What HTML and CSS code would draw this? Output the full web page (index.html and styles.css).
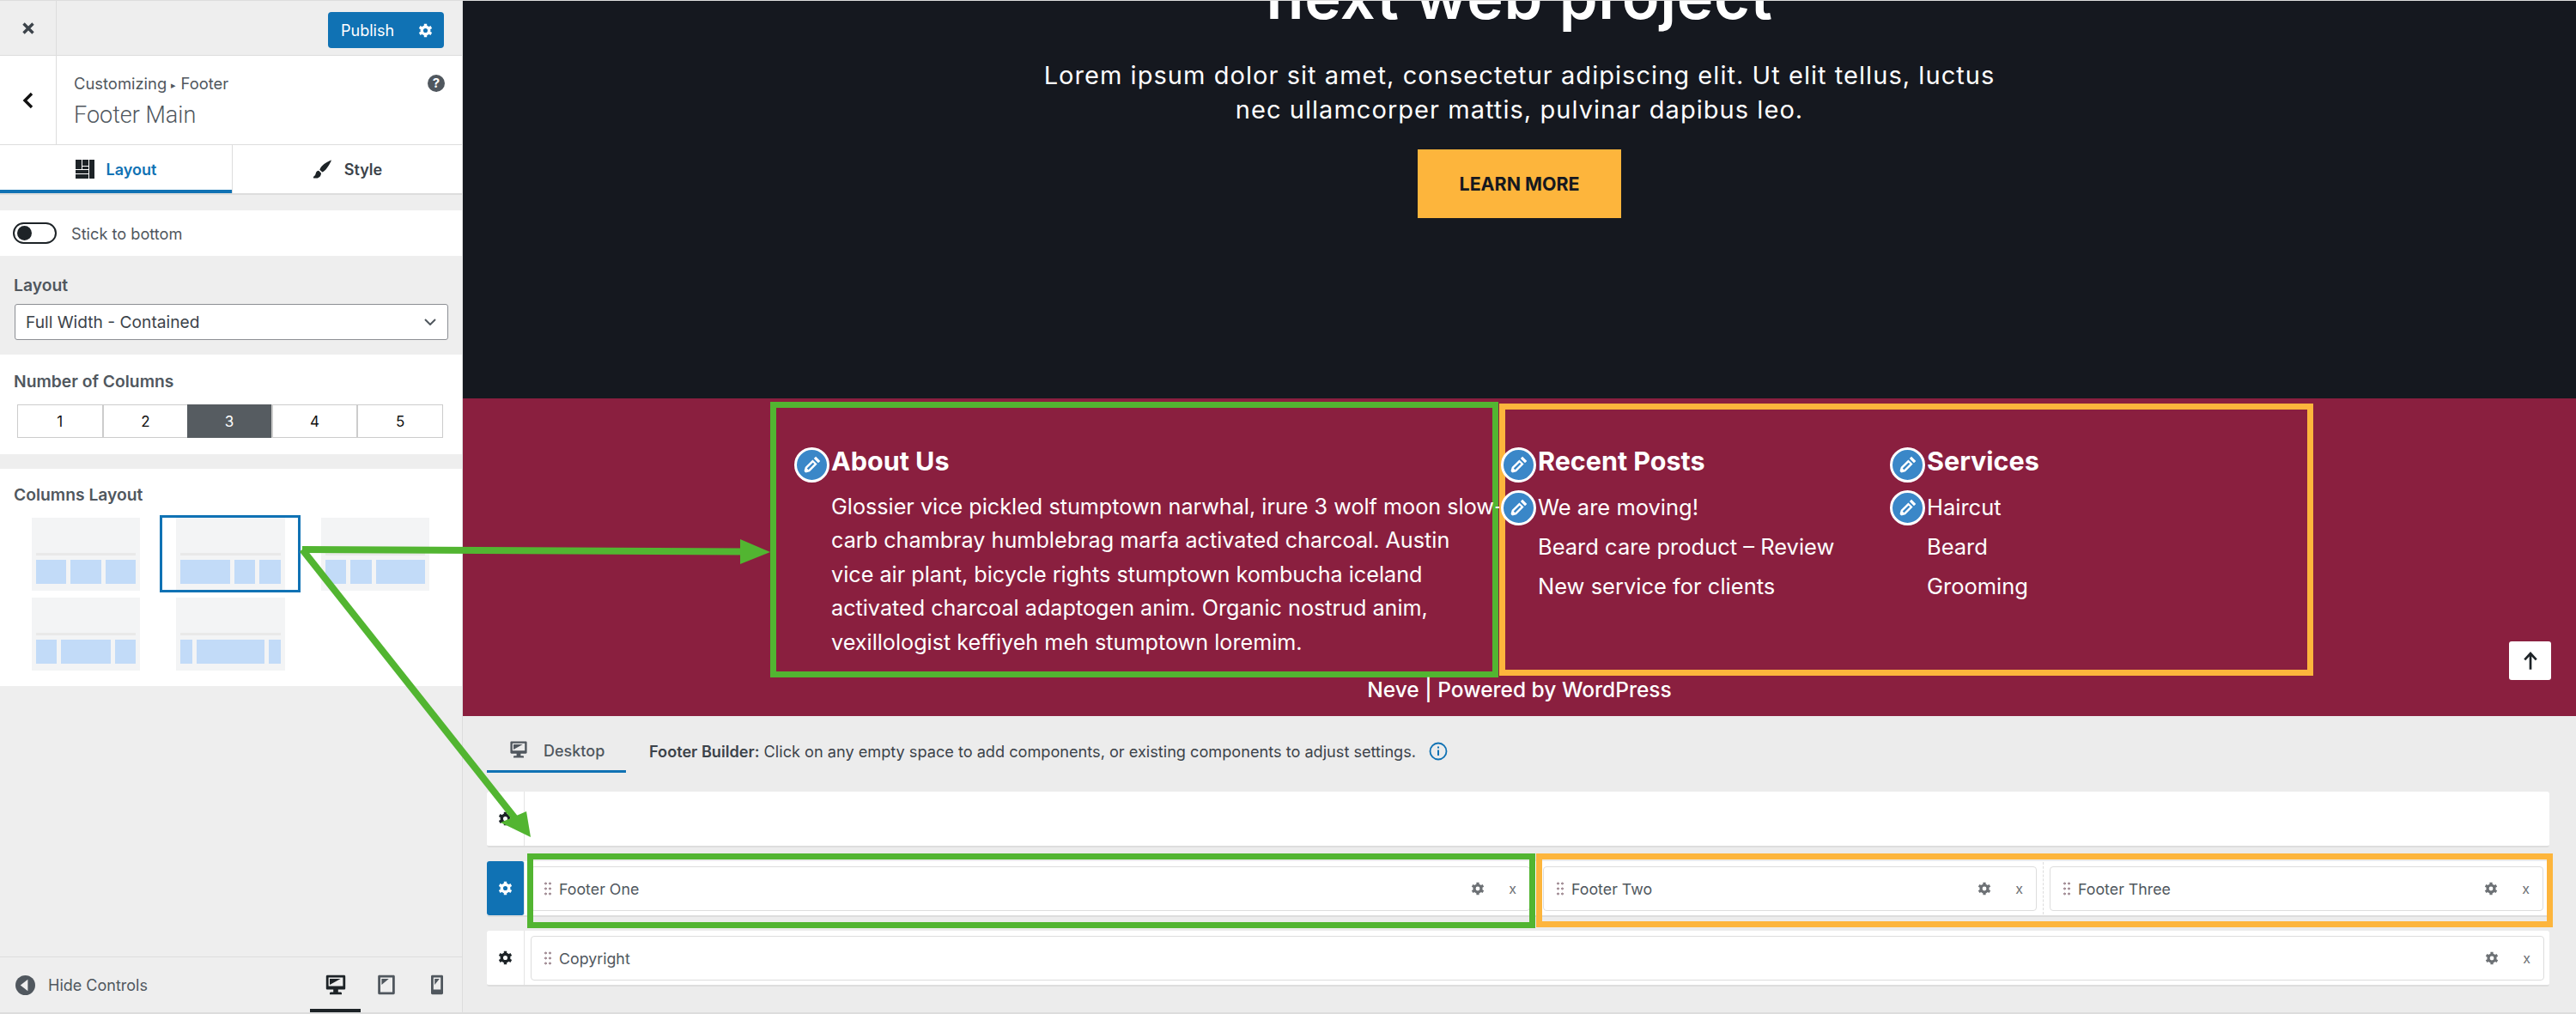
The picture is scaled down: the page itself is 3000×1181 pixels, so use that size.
FILE: index.html
```html
<!DOCTYPE html>
<html lang="en">
<head>
<meta charset="utf-8">
<title>Customizing Footer</title>
<link rel="stylesheet" href="styles.css">
</head>
<body>
<svg class="defs" width="0" height="0" aria-hidden="true">
  <symbol id="gear" viewBox="0 0 20 20">
    <circle cx="10" cy="10" r="5" fill="none" stroke="currentColor" stroke-width="4"/>
    <path d="M10 .8v4M10 15.200v4M2 5.400l3.500 2M14.500 12.600l3.500 2M2 14.600l3.500-2M14.500 7.400l3.500-2" stroke="currentColor" stroke-width="4" fill="none"/>
  </symbol>
  <symbol id="pencil" viewBox="0 0 20 20">
    <path d="M14 1.500l4.500 4.500-2 2L12 3.500zM10.800 4.700l4.500 4.500-7.500 7.500-6.300 1.800 1.800-6.300zM11 7.500l-6 6 1.500 1.500 6-6z" fill="#fff" fill-rule="evenodd"/>
  </symbol>
</svg>
<div class="app">
  <aside class="sidebar">
    <div class="topbar">
      <div class="close-cell">
        <svg class="close-icon" viewBox="0 0 16 16"><path d="M2.500 2.500l11 11M13.500 2.500l-11 11" stroke="#3c434a" stroke-width="3.400"/></svg>
      </div>
      <div class="publish">
        <span>Publish</span>
        <svg class="pub-gear"><use href="#gear"/></svg>
      </div>
    </div>
    <div class="section-head">
      <div class="back-cell">
        <svg class="back-icon" viewBox="0 0 14 20"><path d="M11 2L3 10l8 8" fill="none" stroke="#111" stroke-width="3.400"/></svg>
      </div>
      <div class="head-text">
        <div class="crumb">Customizing <span class="crumb-arrow">▸</span> Footer</div>
        <div class="head-title">Footer Main</div>
      </div>
      <div class="help">?</div>
    </div>
    <div class="tabs">
      <div class="tab tab-active">
        <svg class="tab-icon" viewBox="0 0 22 22"><path d="M0 0h7v11H0zM8 0h7v7H8zM8 8h7v3H8zM0 12h15v4H0zM0 17h15v5H0zM16 0h6v22h-6z" fill="#1d2327"/></svg>
        <span>Layout</span>
      </div>
      <div class="tab">
        <svg class="tab-icon brush" viewBox="0 0 24 24"><path d="M23.500.5c-2 .6-8.500 3.600-12 7.500-1.400 1.500-2.600 3.600-3 4.800l3.400 3c1.300-.6 3.200-2 4.600-3.600 3.400-3.800 6.200-9.700 7-11.700zM7.300 14c-2.300.2-3.300 1.700-3.800 3.500-.4 1.700-1.200 3.200-3 4.200 0 .8 0 1.500.2 1.800h5.100c2.800-1 4.400-2.800 4.600-6.200z" fill="#1d2327"/></svg>
        <span>Style</span>
      </div>
    </div>
    <div class="panel stick">
      <div class="toggle"><span class="knob"></span></div>
      <span class="stick-label">Stick to bottom</span>
    </div>
    <div class="layout-field">
      <div class="field-label">Layout</div>
      <div class="select">
        <span>Full Width - Contained</span>
        <svg class="chev" viewBox="0 0 14 8"><path d="M1 1l6 6 6-6" fill="none" stroke="#50575e" stroke-width="2"/></svg>
      </div>
    </div>
    <div class="panel num-cols">
      <div class="field-label">Number of Columns</div>
      <div class="segments">
        <div class="seg">1</div>
        <div class="seg">2</div>
        <div class="seg seg-on">3</div>
        <div class="seg">4</div>
        <div class="seg">5</div>
      </div>
    </div>
    <div class="panel col-layout">
      <div class="field-label">Columns Layout</div>
      <div class="thumbs">
        <div class="thumb"><i class="t-line"></i><div class="t-cols"><b class="w35"></b><b class="w35"></b><b class="w35"></b></div></div>
        <div class="thumb thumb-on"><i class="t-line"></i><div class="t-cols"><b class="w56"></b><b class="w24"></b><b class="w24"></b></div></div>
        <div class="thumb"><i class="t-line"></i><div class="t-cols"><b class="w24"></b><b class="w24"></b><b class="w56"></b></div></div>
        <div class="thumb"><i class="t-line"></i><div class="t-cols"><b class="w24"></b><b class="w56"></b><b class="w24"></b></div></div>
        <div class="thumb"><i class="t-line"></i><div class="t-cols"><b class="w14"></b><b class="w76"></b><b class="w14"></b></div></div>
      </div>
    </div>
    <div class="side-foot">
      <div class="hide-controls">
        <svg class="hide-icon" viewBox="0 0 24 24"><circle cx="12" cy="12" r="12" fill="#50575e"/><path d="M15 5v14L6 12z" fill="#eee"/></svg>
        <span>Hide Controls</span>
      </div>
      <div class="devices">
        <div class="device device-on"><svg viewBox="0 0 20 20"><path d="M3 2h14c.55 0 1 .45 1 1v10c0 .55-.45 1-1 1h-5v2h2c.55 0 1 .45 1 1v1H5v-1c0-.55.45-1 1-1h2v-2H3c-.55 0-1-.45-1-1V3c0-.55.45-1 1-1zm13 9V4H4v7h12zM5 5h9L5 10V5z"/></svg></div>
        <div class="device"><svg viewBox="0 0 20 20"><path d="M4 2h12c.55 0 1 .45 1 1v14c0 .55-.45 1-1 1H4c-.55 0-1-.45-1-1V3c0-.55.45-1 1-1zm11 14V4H5v12h10zM6 5h6l-6 5V5z"/></svg></div>
        <div class="device"><svg viewBox="0 0 20 20"><path d="M6 2h8c.55 0 1 .45 1 1v14c0 .55-.45 1-1 1H6c-.55 0-1-.45-1-1V3c0-.55.45-1 1-1zm7 12V4H7v10h6zM8 5h4l-4 5V5z"/></svg></div>
      </div>
    </div>
  </aside>

  <main class="main">
    <section class="preview">
      <div class="hero">
        <h1 class="hero-title">next web project</h1>
        <p class="hero-text">Lorem ipsum dolor sit amet, consectetur adipiscing elit. Ut elit tellus, luctus<br>nec ullamcorper mattis, pulvinar dapibus leo.</p>
        <a class="hero-btn">LEARN MORE</a>
      </div>
      <footer class="site-footer">
        <div class="foot-widgets">
          <div class="box-green">
            <h3 class="w-title"><svg class="pen"><use href="#pencil"/></svg>About Us</h3>
            <p class="w-para">Glossier vice pickled stumptown narwhal, irure 3 wolf moon slow-<br>carb chambray humblebrag marfa activated charcoal. Austin<br>vice air plant, bicycle rights stumptown kombucha iceland<br>activated charcoal adaptogen anim. Organic nostrud anim,<br>vexillologist keffiyeh meh stumptown loremim.</p>
          </div>
          <div class="box-orange">
            <div class="w-col w-col-posts">
              <h3 class="w-title"><svg class="pen"><use href="#pencil"/></svg>Recent Posts</h3>
              <ul class="w-list">
                <li><svg class="pen"><use href="#pencil"/></svg>We are moving!</li>
                <li>Beard care product – Review</li>
                <li>New service for clients</li>
              </ul>
            </div>
            <div class="w-col">
              <h3 class="w-title"><svg class="pen"><use href="#pencil"/></svg>Services</h3>
              <ul class="w-list">
                <li><svg class="pen"><use href="#pencil"/></svg>Haircut</li>
                <li>Beard</li>
                <li>Grooming</li>
              </ul>
            </div>
          </div>
        </div>
        <div class="copyright">Neve | Powered by WordPress</div>
        <div class="scroll-top"><svg viewBox="0 0 16 20"><path d="M8 19V3M2 9l6-6.500L14 9" fill="none" stroke="#1d2327" stroke-width="2.400"/></svg></div>
      </footer>
    </section>

    <section class="builder">
      <div class="builder-head">
        <div class="desk-tab">
          <svg class="desk-icon" viewBox="0 0 20 20"><path d="M3 2h14c.55 0 1 .45 1 1v10c0 .55-.45 1-1 1h-5v2h2c.55 0 1 .45 1 1v1H5v-1c0-.55.45-1 1-1h2v-2H3c-.55 0-1-.45-1-1V3c0-.55.45-1 1-1zm13 9V4H4v7h12zM5 5h9L5 10V5z"/></svg>
          <span>Desktop</span>
        </div>
        <div class="builder-note"><strong>Footer Builder:</strong> Click on any empty space to add components, or existing components to adjust settings.</div>
        <svg class="info" viewBox="0 0 22 22"><circle cx="11" cy="11" r="9.500" fill="none" stroke="#1072b4" stroke-width="1.800"/><path d="M11 9.500v6.500M11 5.500v2" stroke="#1072b4" stroke-width="2"/></svg>
      </div>
      <div class="rows">
        <div class="row">
          <div class="row-gear"><svg class="gear-18"><use href="#gear"/></svg></div>
          <div class="row-body"></div>
        </div>
        <div class="row row-active">
          <div class="row-gear"><svg class="gear-18"><use href="#gear"/></svg></div>
          <div class="row-body row-three">
            <div class="card"><i class="handle"></i><span class="card-name">Footer One</span><svg class="card-gear"><use href="#gear"/></svg><span class="card-x">x</span></div>
            <div class="card card-div"><i class="handle"></i><span class="card-name">Footer Two</span><svg class="card-gear"><use href="#gear"/></svg><span class="card-x">x</span></div>
            <div class="card card-div"><i class="handle"></i><span class="card-name">Footer Three</span><svg class="card-gear"><use href="#gear"/></svg><span class="card-x">x</span></div>
          </div>
        </div>
        <div class="row">
          <div class="row-gear"><svg class="gear-18"><use href="#gear"/></svg></div>
          <div class="row-body">
            <div class="card card-full"><i class="handle"></i><span class="card-name">Copyright</span><svg class="card-gear"><use href="#gear"/></svg><span class="card-x">x</span></div>
          </div>
        </div>
      </div>
    </section>
  </main>
</div>

<div class="note-box note-green"></div>
<div class="note-box note-orange"></div>
<svg class="arrows" viewBox="0 0 3000 1181">
  <path d="M352 640L870 642.500" stroke="#52b531" stroke-width="8" fill="none"/>
  <path d="M897 643L862 628v29z" fill="#52b531"/>
  <path d="M352 640L603 957" stroke="#52b531" stroke-width="8" fill="none"/>
  <path d="M618 975L583 958 613 945z" fill="#52b531"/>
</svg>
</body>
</html>
```

FILE: styles.css
```css
* { box-sizing: border-box; }
html, body { margin: 0; padding: 0; }
body {
  position: relative;
  width: 3000px;
  height: 1181px;
  overflow: hidden;
  font-family: "Inter", "Liberation Sans", sans-serif;
  color: #50575e;
  background: #eee;
}
.defs { position: absolute; }
.app {
  display: flex;
  height: 1181px;
  border-top: 1px solid #ddd;
  border-bottom: 2px solid #ddd;
}

/* Sidebar */
.sidebar {
  width: 539px;
  flex: none;
  display: flex;
  flex-direction: column;
  background: #eee;
  border-right: 1px solid #ddd;
}
.topbar {
  height: 64px;
  flex: none;
  display: flex;
  align-items: flex-start;
  justify-content: space-between;
  border-bottom: 1px solid #ddd;
  padding-right: 21px;
}
.close-cell {
  width: 66px;
  height: 63px;
  display: flex;
  align-items: center;
  justify-content: center;
  border-right: 1px solid #ddd;
}
.close-icon { width: 16px; height: 16px; }
.publish {
  width: 135px;
  height: 42px;
  margin-top: 13px;
  display: flex;
  align-items: center;
  gap: 28px;
  padding-left: 15px;
  background: #1072b4;
  border-radius: 4px;
  color: #fff;
  font-size: 18px;
}
.pub-gear { width: 17px; height: 17px; color: #fff; }
.section-head {
  height: 104px;
  flex: none;
  display: flex;
  background: #fff;
  border-bottom: 1px solid #ddd;
}
.back-cell {
  width: 66px;
  display: flex;
  align-items: center;
  justify-content: center;
  border-right: 1px solid #ddd;
}
.back-icon { width: 14px; height: 20px; }
.head-text { flex: 1; padding: 21px 0 0 20px; }
.crumb { font-size: 18.400px; line-height: 22px; color: #50575e; }
.crumb-arrow { font-size: 11px; vertical-align: 1px; }
.head-title {
  margin-top: 8px;
  font-family: "Roboto", sans-serif;
  font-weight: 300;
  font-size: 27px;
  line-height: 32px;
  color: #50575e;
}
.help {
  width: 20px;
  height: 20px;
  margin: 22px 20px 0 0;
  border-radius: 50%;
  background: #50575e;
  color: #fff;
  font-size: 15px;
  font-weight: 700;
  line-height: 20px;
  text-align: center;
}
.tabs {
  height: 58px;
  flex: none;
  display: flex;
  background: #fff;
  border-bottom: 2px solid #ddd;
}
.tab {
  flex: 1;
  display: flex;
  align-items: center;
  justify-content: center;
  gap: 14px;
  font-size: 18px;
  font-weight: 600;
  color: #3c434a;
  border-left: 1px solid #ddd;
}
.tab-active {
  flex: none;
  width: 270px;
  color: #1072b4;
  border-left: 0;
  border-bottom: 4px solid #1072b4;
  padding-top: 4px;
}
.tab-icon { width: 22px; height: 22px; }
.brush { width: 23px; }
.panel { background: #fff; }
.stick {
  height: 53px;
  margin-top: 18px;
  flex: none;
  display: flex;
  align-items: center;
  padding-left: 15px;
  font-size: 18.200px;
}
.toggle {
  width: 51px;
  height: 25px;
  border: 2px solid #1d2327;
  border-radius: 13px;
  padding: 2px 3px;
}
.knob {
  display: block;
  width: 17px;
  height: 17px;
  border-radius: 50%;
  background: #1d2327;
}
.stick-label { margin-left: 17px; }
.layout-field { height: 115px; flex: none; padding: 23px 16px 0; }
.field-label {
  font-size: 19.300px;
  line-height: 22px;
  font-weight: 600;
  color: #50575e;
}
.select {
  height: 42px;
  margin: 11px 0 0 1px;
  width: 505px;
  display: flex;
  align-items: center;
  justify-content: space-between;
  padding: 0 13px 0 12px;
  background: #fff;
  border: 1px solid #8c8f94;
  border-radius: 3px;
  font-size: 19.200px;
  color: #3c434a;
}
.chev { width: 14px; height: 8px; }
.num-cols { height: 116px; flex: none; padding: 20px 16px 0; }
.segments {
  width: 496px;
  height: 39px;
  margin: 16px 0 0 4px;
  display: flex;
  border: 1px solid #ccc;
}
.seg {
  flex: 1;
  display: flex;
  align-items: center;
  justify-content: center;
  font-size: 17px;
  color: #111;
  border-left: 2px solid #ccc;
}
.seg:first-child { border-left: 0; }
.seg-on { background: #565c61; color: #fff; border-left: 0; margin: -1px 0; }
.col-layout { height: 253px; margin-top: 17px; flex: none; padding: 19px 16px 0; }
.thumbs {
  display: grid;
  grid-template-columns: 126px 127px 126px;
  column-gap: 42px;
  row-gap: 8px;
  margin: 16px 0 0 21px;
}
.thumb {
  position: relative;
  height: 85px;
  display: flex;
  flex-direction: column;
  justify-content: flex-end;
  padding: 0 5px 8px;
  background: #f3f4f5;
}
.thumb-on::after {
  content: "";
  position: absolute;
  inset: -3px -18px -2px -19px;
  border: 3px solid #1072b4;
}
.t-line { display: block; height: 3px; margin-bottom: 5px; background: #e9e9e9; }
.t-cols { display: flex; gap: 5px; height: 28px; }
.t-cols b { display: block; background: #c2dbf8; }
.w14 { flex: 14; }
.w24 { flex: 24; }
.w35 { flex: 35; }
.w56 { flex: 56; }
.w76 { flex: 76; }
.side-foot {
  margin-top: auto;
  height: 65px;
  flex: none;
  display: flex;
  align-items: flex-start;
  justify-content: space-between;
  border-top: 1px solid #ddd;
  padding: 0 0 0 18px;
}
.hide-controls {
  display: flex;
  align-items: center;
  gap: 15px;
  height: 64px;
  font-size: 18px;
  color: #50575e;
}
.hide-icon { width: 23px; height: 23px; }
.devices { display: flex; align-items: flex-start; }
.device {
  width: 59px;
  height: 64px;
  display: flex;
  align-items: center;
  justify-content: center;
  fill: #50575e;
}
.device svg { width: 28px; height: 28px; }
.device-on { fill: #1d2327; border-bottom: 4px solid #1d2327; padding-top: 4px; }

/* Preview */
.main { flex: 1; min-width: 0; display: flex; flex-direction: column; }
.preview { height: 833px; flex: none; overflow: hidden; }
.hero {
  height: 463px;
  overflow: hidden;
  display: flex;
  flex-direction: column;
  align-items: center;
  background: #15181f;
  color: #fff;
}
.hero-title {
  margin: -50px 0 0;
  font-size: 72px;
  line-height: 90px;
  font-weight: 600;
  white-space: nowrap;
  letter-spacing: .6px;
}
.hero-text {
  margin: 27px 0 0;
  font-size: 29px;
  line-height: 39.500px;
  text-align: center;
  letter-spacing: 1.050px;
}
.hero-btn {
  width: 237px;
  height: 80px;
  margin-top: 27px;
  display: flex;
  align-items: center;
  justify-content: center;
  background: #fdb53c;
  color: #15181f;
  font-size: 21.400px;
  font-weight: 700;
}
.site-footer {
  position: relative;
  height: 370px;
  background: #8a1f3f;
  color: #fff;
}
.foot-widgets {
  display: flex;
  align-items: flex-start;
  padding: 4px 0 0 358px;
}
.box-green {
  width: 848px;
  height: 321px;
  padding: 42px 0 0 64px;
  border: 7px solid #52b531;
}
.box-orange {
  width: 948px;
  height: 317px;
  margin: 2px 0 0 1px;
  padding: 40px 0 0 38px;
  border: 7px solid #fdb53c;
  display: flex;
}
.w-col { position: relative; }
.w-col-posts { width: 453px; }
.w-title {
  position: relative;
  margin: 0;
  font-size: 30.500px;
  line-height: 40px;
  font-weight: 700;
}
.pen {
  position: absolute;
  left: -43px;
  top: 4px;
  width: 41px;
  height: 41px;
  padding: 6px;
  border-radius: 50%;
  background: #3a87c8;
  border: 3px solid #fff;
}
.w-para { margin: 14px 0 0; font-size: 25.200px; line-height: 39.400px; white-space: nowrap; }
.w-list { list-style: none; margin: 11px 0 0; padding: 0; font-size: 25.500px; line-height: 46px; }
.w-list li { position: relative; }
.w-list .pen { top: 3px; }
.copyright {
  margin-top: -1px;
  text-align: center;
  font-size: 24.500px;
  line-height: 30px;
  font-weight: 500;
}
.scroll-top {
  position: absolute;
  left: 2383px;
  top: 283px;
  width: 49px;
  height: 45px;
  display: flex;
  align-items: center;
  justify-content: center;
  background: #fff;
  border-radius: 3px;
}
.scroll-top svg { width: 18px; height: 23px; }

/* Builder */
.builder { flex: 1; background: #ececec; padding: 0 31px 0 28px; }
.builder-head { height: 66px; display: flex; align-items: flex-start; }
.desk-tab {
  width: 162px;
  height: 66px;
  flex: none;
  display: flex;
  align-items: flex-start;
  gap: 16px;
  padding: 30px 0 0 24px;
  border-bottom: 3px solid #1072b4;
  font-size: 18px;
  font-weight: 500;
  line-height: 22px;
  color: #50575e;
}
.desk-icon { width: 26px; height: 24px; fill: #50575e; margin-top: -3px; }
.builder-note {
  margin: 30px 0 0 27px;
  font-size: 18.150px;
  line-height: 22px;
  color: #3c434a;
  white-space: nowrap;
}
.builder-note strong { font-weight: 600; }
.info { width: 22px; height: 22px; margin: 30px 0 0 15px; }
.rows { margin-top: 22px; display: flex; flex-direction: column; gap: 16px; }
.row {
  height: 65px;
  display: flex;
  background: #fff;
  border-radius: 3px;
  border-bottom: 2px solid #ddd;
}
.row-gear {
  width: 44px;
  flex: none;
  display: flex;
  align-items: center;
  justify-content: center;
  border-right: 1px solid #e4e4e4;
  color: #1d2327;
}
.gear-18 { width: 17px; height: 17px; }
.row-active .row-gear { background: #1072b4; color: #fff; border-radius: 3px; }
.row-body { flex: 1; min-width: 0; padding: 6px 6px 0 7px; }
.row-three {
  display: grid;
  grid-template-columns: 1164px 575px 575px;
  column-gap: 15px;
}
.card {
  position: relative;
  height: 52px;
  display: flex;
  align-items: center;
  padding: 0 15px 0 14px;
  border: 1px solid #ddd;
  border-radius: 4px;
  background: #fff;
  font-size: 17.800px;
  color: #50575e;
}
.card-div::before {
  content: "";
  position: absolute;
  left: -9px;
  top: -6px;
  bottom: -5px;
  border-left: 1px dashed #ddd;
}
.card-full { width: 100%; }
.handle {
  width: 10px;
  height: 18px;
  flex: none;
  background: radial-gradient(circle, #a7939b 1.300px, transparent 1.700px) 0 0 / 5px 6px;
}
.card-name { margin-left: 8px; }
.card-gear { width: 16px; height: 16px; margin-left: auto; color: #6d7175; }
.card-x { margin-left: 28px; font-size: 16px; color: #6d7175; }

/* Annotations drawn on top of the screenshot */
.note-box { position: absolute; pointer-events: none; border: 7px solid; }
.note-green { left: 614px; top: 994px; width: 1174px; height: 87px; border-color: #52b531; }
.note-orange { left: 1789px; top: 994px; width: 1184px; height: 86px; border-color: #fdb53c; }
.arrows { position: absolute; left: 0; top: 0; width: 3000px; height: 1181px; pointer-events: none; }
```
